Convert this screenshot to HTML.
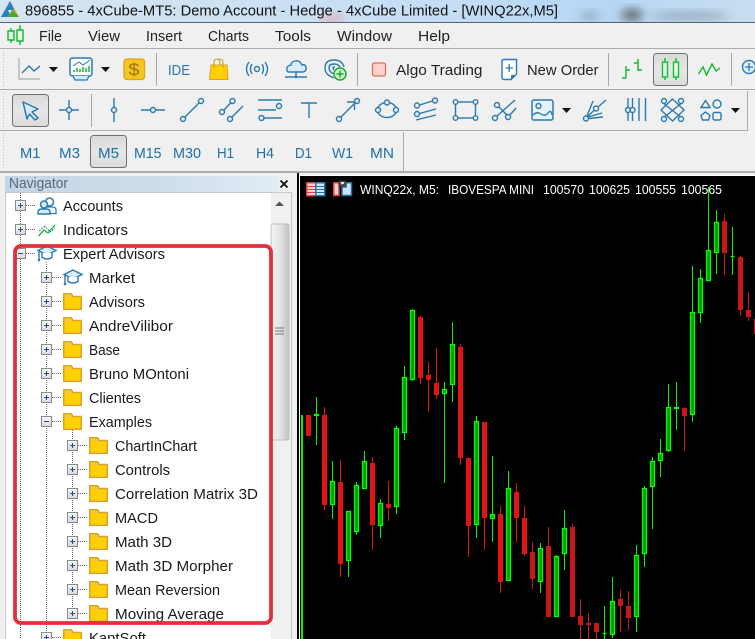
<!DOCTYPE html>
<html><head><meta charset="utf-8"><title>4xCube-MT5</title>
<style>
html,body{margin:0;padding:0;width:755px;height:639px;overflow:hidden;background:#f0f0f0}
svg{display:block}
text{font-family:"Liberation Sans",sans-serif}
.t{font-size:15px;fill:#1a1a1a}
.m{font-size:15px;fill:#222}
.b{font-size:15px;fill:#1f6fa8}
.c{font-size:12.5px;fill:#fff}
.i{fill:none;stroke:#2a7ab0;stroke-width:1.4}
.g{fill:none;stroke:#12b82e;stroke-width:1.4}
.d{stroke:#666;stroke-width:1;stroke-dasharray:1 1;fill:none}
</style></head><body>
<svg xmlns="http://www.w3.org/2000/svg" width="755" height="639" viewBox="0 0 755 639">
<defs>
<linearGradient id="tb" x1="0" x2="1" y1="0" y2="0"><stop offset="0" stop-color="#d6e5f1"/><stop offset=".6" stop-color="#c4def5"/><stop offset=".8" stop-color="#b5d6f5"/><stop offset="1" stop-color="#c9def0"/></linearGradient>
<linearGradient id="nv" x1="0" x2="1" y1="0" y2="0"><stop offset="0" stop-color="#c3d5e6"/><stop offset=".6" stop-color="#cfdeeb"/><stop offset="1" stop-color="#e2ecf6"/></linearGradient>
<linearGradient id="bx" x1="0" x2="0" y1="0" y2="1"><stop offset="0" stop-color="#fafafa"/><stop offset="1" stop-color="#d8d8d8"/></linearGradient>
<linearGradient id="sc" x1="0" x2="1" y1="0" y2="0"><stop offset="0" stop-color="#f4f4f4"/><stop offset=".5" stop-color="#e4e4e4"/><stop offset="1" stop-color="#c0c0c0"/></linearGradient>
<linearGradient id="ab" x1="0" x2="0" y1="0" y2="1"><stop offset="0" stop-color="#d8d8d8"/><stop offset=".5" stop-color="#e6e6e6"/><stop offset="1" stop-color="#dcdcdc"/></linearGradient>
<filter id="bl" x="-50%" y="-50%" width="200%" height="200%"><feGaussianBlur stdDeviation="5"/></filter>
<g id="p"><path class="d" d="M6 -.5H15"/><rect x="-4.5" y="-5.5" width="10" height="10" fill="url(#bx)" stroke="#8a8a8a"/><path d="M-2 -.5H3M.5 -3V2" stroke="#2b4a8a" fill="none"/></g>
<g id="n"><path class="d" d="M6 -.5H15"/><rect x="-4.5" y="-5.5" width="10" height="10" fill="url(#bx)" stroke="#8a8a8a"/><path d="M-2 -.5H3" stroke="#2b4a8a" fill="none"/></g>
<g id="f"><path d="M.7 -8.300H8.500L10 -5.500H18.300V7.300H.7Z" fill="#ffd000" stroke="#d9a030" stroke-width="1.400"/><path d="M1.500 -5H9" stroke="#e8c060" fill="none"/></g>
<g id="hat"><path d="M10 -8L19 -3.500L10 1L1 -3.500Z" fill="#d6ecfa" stroke="#2a7ab0" stroke-width="1.400"/><path d="M5 -1V3.500Q10 6.500 15 3.500V-1" fill="#fff" stroke="#2a7ab0" stroke-width="1.400"/><path d="M2 -3V5" stroke="#2a7ab0" stroke-width="1.400" fill="none"/><circle cx="2" cy="6" r="1.300" fill="#2a7ab0"/></g>
<g id="dd"><path d="M0 0H9L4.500 5Z" fill="#111"/></g>
</defs>

<!-- title bar -->
<rect width="755" height="22" fill="url(#tb)"/>
<ellipse cx="333" cy="19" rx="12" ry="4" fill="#dfa8b0" filter="url(#bl)"/>
<ellipse cx="632" cy="15" rx="11" ry="6" fill="#60666c" filter="url(#bl)"/>
<ellipse cx="690" cy="16" rx="40" ry="4" fill="#8fa5b8" filter="url(#bl)"/>
<ellipse cx="590" cy="16" rx="10" ry="4" fill="#8fa5b8" filter="url(#bl)"/>
<path d="M10 1L19 17H1Z" fill="#e8a020"/><path d="M10 1L14 9L7 17H1Z" fill="#2a7fc0"/><path d="M7 17L12 9L19 17Z" fill="#48a83c"/><path d="M8 10L12 10L10 14Z" fill="#e8e8e8"/>
<text x="25" y="15.500" font-size="15" fill="#111" textLength="533" lengthAdjust="spacingAndGlyphs">896855 - 4xCube-MT5: Demo Account - Hedge - 4xCube Limited - [WINQ22x,M5]</text>
<rect y="22" width="755" height="1" fill="#56626c"/>

<!-- menu -->
<rect y="23" width="755" height="150" fill="#f0f0f0"/>
<path d="M8 31h6v9H8zM17 30h6v11h-6z" fill="#e4f7e4" stroke="#14b82e" stroke-width="1.400"/><path d="M20 25V30M20 41V45M11 28V31M11 40V43" stroke="#14b82e" stroke-width="1.400"/>
<text class="m" x="39" y="41" textLength="23" lengthAdjust="spacingAndGlyphs">File</text>
<text class="m" x="88" y="41" textLength="32" lengthAdjust="spacingAndGlyphs">View</text>
<text class="m" x="146" y="41" textLength="36" lengthAdjust="spacingAndGlyphs">Insert</text>
<text class="m" x="208" y="41" textLength="41" lengthAdjust="spacingAndGlyphs">Charts</text>
<text class="m" x="275" y="41" textLength="36" lengthAdjust="spacingAndGlyphs">Tools</text>
<text class="m" x="337" y="41" textLength="55" lengthAdjust="spacingAndGlyphs">Window</text>
<text class="m" x="418" y="41" textLength="32" lengthAdjust="spacingAndGlyphs">Help</text>
<rect y="48" width="755" height="1" fill="#acacac"/>
<path d="M3.500 52V88M3.500 93V129M3.500 134V170" stroke="#bbb" stroke-dasharray="1 2" fill="none"/>

<!-- toolbar 1 -->
<path d="M19 58V79H40" stroke="#b8b8b8" stroke-width="1.500" fill="none"/>
<path d="M22 73L29 66L34 71L40 66" class="i"/>
<use href="#dd" x="49" y="67"/>
<rect x="70" y="58" width="22" height="18" rx="2.500" fill="#f8fbfd" stroke="#2a7ab0" stroke-width="1.500"/>
<path d="M73 66L79 62L83 65L90 60" fill="none" stroke="#2a7ab0"/>
<path d="M74 72V70M77 72V68M80 72V69M83 72V67M86 72V68M89 72V66" stroke="#14b82e" stroke-width="1.500"/>
<path d="M73 76L75 80H87L89 76" fill="#d6ecfa" stroke="#2a7ab0" stroke-width="1.300"/>
<use href="#dd" x="101" y="67"/>
<rect x="124" y="59" width="20.500" height="20.500" rx="3" fill="#f7c520" stroke="#dca510" stroke-width="1.300"/>
<text x="128.500" y="75" font-size="17" fill="#9a7010" textLength="11" lengthAdjust="spacingAndGlyphs">$</text>
<rect x="156" y="53" width="1" height="33" fill="#a8a8a8"/>
<text x="168" y="75" font-size="15" fill="#2a7ab0" textLength="22" lengthAdjust="spacingAndGlyphs">IDE</text>
<path d="M211 65H227L228 79.500H209.500Z" fill="#ffcf00" stroke="#d8a428"/><path d="M214 68V62Q214 59 218 59Q223 59 223 62V68M218 59Q220 60 220 65" fill="none" stroke="#c89a28" stroke-width="1.100"/>
<circle cx="257" cy="69" r="2.500" class="i"/><path d="M252 64Q249 69 252 74M262 64Q265 69 262 74M249 62Q244 69 249 76M265 62Q270 69 265 76" class="i"/>
<path d="M289 72H303Q307 71 306 67Q305 64 302 65Q300 60 295 61Q291 62 291 65Q286 66 287 70Q287 72 289 72Z" fill="#d8eefc" stroke="#2a7ab0" stroke-width="1.400"/><path d="M296 72V77M285 77H307" class="i"/><circle cx="296" cy="77" r="1.300" fill="#2a7ab0"/>
<path d="M334 78Q325 75 325 68Q325 60 334 60Q342 60 344 67M334 74Q329 72 329 68Q329 64 334 64Q338 64 340 67M334 70Q333 69 333 68Q333 67 335 67" class="i"/>
<circle cx="340" cy="74" r="6" fill="#cdf2cd" stroke="#14a82a" stroke-width="1.400"/><path d="M336.500 74H343.500M340 70.500V77.500" stroke="#14a82a" stroke-width="1.400"/>
<rect x="357" y="53" width="1" height="33" fill="#a8a8a8"/>
<rect x="372.500" y="63" width="13" height="13" rx="2" fill="#fcd2cc" stroke="#e06a64" stroke-width="1.300"/>
<text class="m" x="396" y="75" textLength="86.500" lengthAdjust="spacingAndGlyphs">Algo Trading</text>
<path d="M504 59.500H516.500V74L511 79.500H504Q502 79.500 502 77.500V61.500Q502 59.500 504 59.500Z" fill="#fff" stroke="#2a7ab0" stroke-width="1.400"/><path d="M505.500 68H513M509.200 64V72" stroke="#2a7ab0" stroke-width="1.300"/><path d="M511 79L511 75H516Z" fill="#2a7ab0"/>
<text class="m" x="527" y="75" textLength="71.500" lengthAdjust="spacingAndGlyphs">New Order</text>
<rect x="608" y="53" width="1" height="33" fill="#a8a8a8"/>
<path d="M626 66V78M622 78H626M626 70H630M638 59V71M634 63H638M638 70H642" class="g"/>
<rect x="653.500" y="53.500" width="34" height="32" rx="3" fill="url(#ab)" stroke="#707070"/>
<rect x="662.500" y="62" width="5" height="15" fill="#e8f8e8" stroke="#10c030" stroke-width="1.400"/><rect x="673.500" y="62" width="5" height="15" fill="#e8f8e8" stroke="#10c030" stroke-width="1.400"/><path d="M665 58V62M665 77V80M676 58V62M676 77V80" class="g"/>
<path d="M698.500 74L703 67L706.500 75L712 64L716 71L720 68" class="g"/>
<rect x="731" y="53" width="1" height="33" fill="#a8a8a8"/>
<circle cx="749" cy="67" r="6.500" fill="#e0f0fb" stroke="#2a7ab0" stroke-width="1.400"/><path d="M745 67H753M749 63V71" stroke="#2a7ab0" stroke-width="1.300"/>
<rect y="89" width="755" height="1" fill="#acacac"/>

<!-- toolbar 2 -->
<rect x="12.500" y="94.500" width="36" height="32" rx="3" fill="url(#ab)" stroke="#707070"/>
<path d="M23 102L38 109L32 112L38 118L35 120L29.500 114L27 119Z" fill="#d6ecfa" stroke="#2a7ab0" stroke-width="1.500" stroke-linejoin="round"/>
<circle cx="69" cy="110" r="2.500" class="i"/><path d="M59 110H66M72 110H79M69 100V107M69 113V120" class="i"/>
<rect x="91" y="94" width="1" height="33" fill="#a8a8a8"/>
<circle cx="114" cy="110" r="2.500" class="i"/><path d="M114 98V107.500M114 112.500V122" class="i"/>
<circle cx="153" cy="110" r="2.500" class="i"/><path d="M141 110H150.500M155.500 110H165" class="i"/>
<circle cx="183" cy="119" r="2.500" class="i"/><circle cx="201" cy="101" r="2.500" class="i"/><path d="M185 117L199 103" class="i"/>
<circle cx="222" cy="112" r="2.500" class="i"/><circle cx="232.500" cy="101" r="2.500" class="i"/><path d="M224 110L230.500 103" class="i"/><circle cx="230" cy="119" r="2.500" class="i"/><path d="M232 117L243 106" class="i"/>
<path d="M258 100H282M258 110H276M264 118H282" class="i"/><circle cx="279" cy="106" r="2.500" fill="#f0f0f0" stroke="#2a7ab0" stroke-width="1.400"/><circle cx="261.500" cy="118" r="2.500" fill="#f0f0f0" stroke="#2a7ab0" stroke-width="1.400"/>
<path d="M301 103H317M309 103V118" class="i"/>
<circle cx="339" cy="119" r="2.500" class="i"/><circle cx="357" cy="101" r="2.500" class="i"/><path d="M341 117L355 103M347 102H354.500V110" class="i"/>
<ellipse cx="387" cy="110" rx="9.500" ry="7.500" class="i"/><circle cx="387" cy="102.500" r="2.500" fill="#f0f0f0" stroke="#2a7ab0" stroke-width="1.400"/><circle cx="378" cy="110" r="2.500" fill="#f0f0f0" stroke="#2a7ab0" stroke-width="1.400"/><circle cx="396" cy="110" r="2.500" fill="#f0f0f0" stroke="#2a7ab0" stroke-width="1.400"/>
<circle cx="417" cy="105.500" r="2.500" class="i"/><circle cx="417" cy="114" r="2.500" class="i"/><circle cx="435" cy="100.500" r="2.500" class="i"/><path d="M419.500 105L432.500 101M419.500 113.500L436 109M416 120L436 115" class="i"/>
<rect x="455.500" y="102" width="20" height="16" class="i"/><circle cx="455.500" cy="102" r="2.300" fill="#f0f0f0" stroke="#2a7ab0" stroke-width="1.400"/><circle cx="475.500" cy="102" r="2.300" fill="#f0f0f0" stroke="#2a7ab0" stroke-width="1.400"/><circle cx="455.500" cy="118" r="2.300" fill="#f0f0f0" stroke="#2a7ab0" stroke-width="1.400"/><circle cx="475.500" cy="118" r="2.300" fill="#f0f0f0" stroke="#2a7ab0" stroke-width="1.400"/>
<circle cx="497" cy="105" r="2.500" class="i"/><circle cx="495" cy="118" r="2.500" class="i"/><circle cx="508" cy="117" r="2.500" class="i"/><path d="M499 107L507 115M497 116L515 100M510 115L516 108" class="i"/>
<rect x="532" y="100" width="21" height="20" rx="2" fill="#e6f3fc" stroke="#2a7ab0" stroke-width="1.500"/><circle cx="538.500" cy="106" r="2.500" class="i"/><path d="M533 115Q537 111 541 114T548 113T552 115" class="i"/>
<use href="#dd" x="562" y="108"/>
<circle cx="586" cy="118.500" r="2.500" class="i"/><circle cx="596" cy="108.500" r="2.500" class="i"/><path d="M587 116L593 101M588 116L594 110.500M598 107L606 100M588 117L602 113M589 118.500L603 117" class="i"/>
<circle cx="628" cy="110" r="2.500" class="i"/><circle cx="632.500" cy="110" r="2.500" class="i"/><path d="M628 98V107.500M628 112.500V121M632.500 98V107.500M632.500 112.500V121M639 98V121M645.500 98V121" class="i"/>
<path d="M662 102L683 119M683 102L662 119M672.500 99L684 110L672.500 121L661 110Z" class="i"/><circle cx="664" cy="101" r="2.500" fill="#f0f0f0" stroke="#2a7ab0" stroke-width="1.400"/><circle cx="681" cy="101" r="2.500" fill="#f0f0f0" stroke="#2a7ab0" stroke-width="1.400"/><circle cx="664" cy="119" r="2.500" fill="#f0f0f0" stroke="#2a7ab0" stroke-width="1.400"/><circle cx="681" cy="119" r="2.500" fill="#f0f0f0" stroke="#2a7ab0" stroke-width="1.400"/>
<path d="M701 107.500L705.500 100.500L710 107.500Z" class="i"/><circle cx="717" cy="104" r="4" class="i"/><path d="M705.500 112L710 115.500L708.500 120H702.500L701 115.500Z" class="i"/><rect x="713" y="112.500" width="8" height="7.500" rx="1.500" class="i"/>
<use href="#dd" x="731" y="108"/>
<rect y="130" width="748" height="1" fill="#acacac"/>
<rect x="747" y="91" width="1" height="40" fill="#acacac"/>

<!-- toolbar 3 -->
<rect x="90.500" y="135.500" width="36" height="32" rx="3" fill="url(#ab)" stroke="#707070"/>
<text class="b" x="20" y="158" textLength="20.500" lengthAdjust="spacingAndGlyphs">M1</text>
<text class="b" x="59" y="158" textLength="21" lengthAdjust="spacingAndGlyphs">M3</text>
<text class="b" x="98" y="158" textLength="21" lengthAdjust="spacingAndGlyphs">M5</text>
<text class="b" x="134" y="158" textLength="27.500" lengthAdjust="spacingAndGlyphs">M15</text>
<text class="b" x="173" y="158" textLength="28" lengthAdjust="spacingAndGlyphs">M30</text>
<text class="b" x="217" y="158" textLength="17" lengthAdjust="spacingAndGlyphs">H1</text>
<text class="b" x="256" y="158" textLength="18" lengthAdjust="spacingAndGlyphs">H4</text>
<text class="b" x="295" y="158" textLength="17" lengthAdjust="spacingAndGlyphs">D1</text>
<text class="b" x="332" y="158" textLength="21" lengthAdjust="spacingAndGlyphs">W1</text>
<text class="b" x="370" y="158" textLength="24" lengthAdjust="spacingAndGlyphs">MN</text>
<rect x="403" y="132" width="1" height="40" fill="#acacac"/>
<rect y="171" width="755" height="2" fill="#acacac"/>

<!-- navigator -->
<rect x="5" y="176" width="274" height="16" fill="url(#nv)"/>
<text x="9" y="188" font-size="14.500" fill="#56687a" textLength="59" lengthAdjust="spacingAndGlyphs">Navigator</text>
<path d="M280.500 180.500L287.500 187.500M287.500 180.500L280.500 187.500" stroke="#111" stroke-width="1.800"/>
<rect x="5" y="192" width="266" height="447" fill="#fff"/>
<rect x="5" y="192" width="286" height="1" fill="#c8c8c8"/>
<rect x="5" y="192" width="1" height="447" fill="#c8c8c8"/>
<rect x="271" y="193" width="20" height="446" fill="#f0f0f0"/>
<path d="M275 206H284L279.500 201.500Z" fill="#555"/>
<rect x="271" y="224" width="18" height="216" rx="2" fill="url(#sc)" stroke="#c0c0c0"/>
<path d="M275 328H284M275 331H284M275 334H284" stroke="#777" fill="none"/>
<rect x="291" y="173" width="6" height="466" fill="#f0f0f0"/>
<rect x="297" y="173" width="2" height="466" fill="#000"/>
<rect x="291" y="192" width="1" height="447" fill="#c4c4c4"/>

<path class="d" d="M20.500 193V639M46.500 262V639M72.500 430V620"/>

<use href="#p" x="20" y="206"/>
<use href="#p" x="20" y="230"/>
<use href="#n" x="20" y="254"/>
<use href="#p" x="46" y="278"/>
<use href="#p" x="46" y="302"/>
<use href="#p" x="46" y="326"/>
<use href="#p" x="46" y="350"/>
<use href="#p" x="46" y="374"/>
<use href="#p" x="46" y="398"/>
<use href="#n" x="46" y="422"/>
<use href="#p" x="72" y="446"/>
<use href="#p" x="72" y="470"/>
<use href="#p" x="72" y="494"/>
<use href="#p" x="72" y="518"/>
<use href="#p" x="72" y="542"/>
<use href="#p" x="72" y="566"/>
<use href="#p" x="72" y="590"/>
<use href="#p" x="72" y="614"/>
<use href="#p" x="46" y="638"/>

<!-- accounts icon -->
<circle cx="49.500" cy="202" r="4" fill="#fff" stroke="#2a7ab0" stroke-width="1.500"/>
<path d="M44 213.500V210Q44 207 48 207H52Q56 207 56 210V213.500Z" fill="#fff" stroke="#2a7ab0" stroke-width="1.300"/>
<circle cx="44" cy="204.500" r="3.500" fill="#d6ecfa" stroke="#2a7ab0" stroke-width="1.500"/>
<path d="M38 214V212Q38 209 42 209H46Q50 209 50 212V214Z" fill="#d6ecfa" stroke="#2a7ab0" stroke-width="1.400"/>
<!-- indicators icon -->
<path d="M38.500 236L44 230L48 233L55 225" fill="none" stroke="#14b82e" stroke-width="1.300"/><path d="M39 231L45 226L50 232L55 228" fill="none" stroke="#2a7ab0" stroke-width="1" stroke-dasharray="2 1"/>
<use href="#hat" x="37" y="254"/>
<use href="#hat" x="63" y="278"/>

<use href="#f" x="63" y="302"/>
<use href="#f" x="63" y="326"/>
<use href="#f" x="63" y="350"/>
<use href="#f" x="63" y="374"/>
<use href="#f" x="63" y="398"/>
<use href="#f" x="63" y="422"/>
<use href="#f" x="89" y="446"/>
<use href="#f" x="89" y="470"/>
<use href="#f" x="89" y="494"/>
<use href="#f" x="89" y="518"/>
<use href="#f" x="89" y="542"/>
<use href="#f" x="89" y="566"/>
<use href="#f" x="89" y="590"/>
<use href="#f" x="89" y="614"/>
<use href="#f" x="63" y="638"/>

<text class="t" x="63" y="211" textLength="60" lengthAdjust="spacingAndGlyphs">Accounts</text>
<text class="t" x="63" y="235" textLength="65" lengthAdjust="spacingAndGlyphs">Indicators</text>
<text class="t" x="63" y="259" textLength="102" lengthAdjust="spacingAndGlyphs">Expert Advisors</text>
<text class="t" x="89" y="283" textLength="46" lengthAdjust="spacingAndGlyphs">Market</text>
<text class="t" x="89" y="307" textLength="56" lengthAdjust="spacingAndGlyphs">Advisors</text>
<text class="t" x="89" y="331" textLength="84" lengthAdjust="spacingAndGlyphs">AndreVilibor</text>
<text class="t" x="89" y="355" textLength="31" lengthAdjust="spacingAndGlyphs">Base</text>
<text class="t" x="89" y="379" textLength="100" lengthAdjust="spacingAndGlyphs">Bruno MOntoni</text>
<text class="t" x="89" y="403" textLength="52" lengthAdjust="spacingAndGlyphs">Clientes</text>
<text class="t" x="89" y="427" textLength="63" lengthAdjust="spacingAndGlyphs">Examples</text>
<text class="t" x="115" y="451" textLength="82" lengthAdjust="spacingAndGlyphs">ChartInChart</text>
<text class="t" x="115" y="475" textLength="55" lengthAdjust="spacingAndGlyphs">Controls</text>
<text class="t" x="115" y="499" textLength="143" lengthAdjust="spacingAndGlyphs">Correlation Matrix 3D</text>
<text class="t" x="115" y="523" textLength="43" lengthAdjust="spacingAndGlyphs">MACD</text>
<text class="t" x="115" y="547" textLength="57" lengthAdjust="spacingAndGlyphs">Math 3D</text>
<text class="t" x="115" y="571" textLength="118" lengthAdjust="spacingAndGlyphs">Math 3D Morpher</text>
<text class="t" x="115" y="595" textLength="105" lengthAdjust="spacingAndGlyphs">Mean Reversion</text>
<text class="t" x="115" y="619" textLength="109" lengthAdjust="spacingAndGlyphs">Moving Average</text>
<text class="t" x="89" y="643" textLength="57" lengthAdjust="spacingAndGlyphs">KantSoft</text>

<rect x="15" y="246" width="256" height="377" rx="6" fill="none" stroke="#e0303c" stroke-width="3.800"/>

<!-- chart -->
<rect x="299" y="175" width="456" height="464" fill="#000"/>
<rect x="299" y="175" width="456" height="1" fill="#fff"/>
<rect x="299" y="175" width="1" height="464" fill="#fff"/>
<rect x="306.750" y="182.750" width="9" height="13" fill="#fbd0cc" stroke="#e04040" stroke-width="1.500"/><rect x="315.750" y="182.750" width="9" height="13" fill="#cde6fa" stroke="#1f6fb0" stroke-width="1.500"/><path d="M307 186.500H315M307 189.500H315M307 192.500H315" stroke="#e04040"/><path d="M316 186.500H324M316 189.500H324M316 192.500H324" stroke="#1f6fb0"/>
<path d="M333.750 182.750H339V195.500H333.750Z" fill="#fbd0cc" stroke="#e04040" stroke-width="1.500"/><path d="M346 182.750H351.500V195.500H342V187H346Z" fill="#cde6fa" stroke="#1f6fb0" stroke-width="1.500"/><rect x="339" y="181" width="7" height="5" fill="#555" stroke="#333"/><rect x="341" y="182" width="3" height="2" fill="#ddd"/>

<path fill="#e01414" d="M306 415h5v21h-5zM324 407h1v103h-1zM322 415h5v90h-5zM340 460h1v117h-1zM338 482h5v82h-5zM372 457h1v93h-1zM370 463h5v62h-5zM388 481h1v40h-1zM386 504h5v4h-5zM420 316h1v68h-1zM418 317h5v61h-5zM428 362h1v50h-1zM426 375h5v5h-5zM436 348h1v51h-1zM434 383h5v12h-5zM460 344h1v121h-1zM458 347h5v111h-5zM468 458h1v99h-1zM466 458h5v68h-5zM484 422h1v128h-1zM482 422h5v96h-5zM500 506h1v87h-1zM498 514h5v68h-5zM516 483h1v59h-1zM514 492h5v26h-5zM524 506h1v50h-1zM522 518h5v36h-5z"/>
<path fill="#c8181c" d="M532 542h1v47h-1zM530 552h5v27h-5zM548 527h1v90h-1zM546 546h5v71h-5zM572 524h1v93h-1zM570 527h5v90h-5zM580 599h1v40h-1zM578 616h5v9h-5zM588 613h1v26h-1zM586 623h5v2h-5zM596 623h1v16h-1zM594 623h5v9h-5zM620 590h1v42h-1zM618 599h5v7h-5zM628 591h1v39h-1zM626 606h5v12h-5zM684 407h1v44h-1zM682 408h5v8h-5zM724 214h1v61h-1zM722 221h5v32h-5zM740 256h1v60h-1zM738 257h5v53h-5zM748 292h1v29h-1zM746 310h5v7h-5zM754 319h1v15h-1z"/>
<path fill="#00f800" d="M301 415h2v224h-2zM316 397h1v48h-1zM332 461h1v58h-1zM348 511h1v66h-1zM356 482h1v53h-1zM364 451h1v38h-1zM380 499h1v39h-1zM396 426h1v88h-1zM404 366h1v74h-1zM412 309h1v72h-1zM444 382h1v101h-1zM452 322h1v80h-1zM476 416h1v122h-1zM492 456h1v86h-1zM508 471h1v110h-1zM540 543h1v50h-1zM556 555h1v62h-1zM564 510h1v60h-1zM604 606h1v33h-1zM612 577h1v61h-1zM636 545h1v87h-1zM644 486h1v81h-1zM652 457h1v72h-1zM660 439h1v38h-1zM668 384h1v68h-1zM676 382h1v48h-1zM692 266h1v156h-1zM700 269h1v54h-1zM708 187h1v94h-1zM716 210h1v64h-1zM732 227h1v48h-1z"/>
<path fill="#00a000" stroke="#00ff00" stroke-width="1.200" d="M314.500 414.500h4v1h-4zM330.500 481.500h4v23h-4zM346.500 511.500h4v49h-4zM354.500 485.500h4v46h-4zM362.500 461.500h4v27h-4zM378.500 503.500h4v22h-4zM394.500 428.500h4v78h-4zM402.500 377.500h4v55h-4zM410.500 310.500h4v69h-4zM442.500 389.500h4v4h-4zM450.500 344.500h4v40h-4zM474.500 421.500h4v103h-4zM490.500 514.500h4v4h-4zM506.500 488.500h4v92h-4zM538.500 548.500h4v33h-4zM554.500 556.500h4v60h-4zM562.500 528.500h4v25h-4zM602.500 633.500h4v0h-4zM610.500 601.500h4v33h-4zM634.500 555.500h4v61h-4zM642.500 488.500h4v65h-4zM650.500 461.500h4v25h-4zM658.500 453.500h4v7h-4zM666.500 407.500h4v43h-4zM674.500 407.500h4v1h-4zM690.500 312.500h4v102h-4zM698.500 278.500h4v34h-4zM706.500 250.500h4v30h-4zM714.500 222.500h4v30h-4zM730.500 256.500h4v0h-4z"/>

<text class="c" x="360" y="194" textLength="79" lengthAdjust="spacingAndGlyphs">WINQ22x, M5:</text>
<text class="c" x="448" y="194" textLength="86" lengthAdjust="spacingAndGlyphs">IBOVESPA MINI</text>
<text class="c" x="543" y="194" textLength="41" lengthAdjust="spacingAndGlyphs">100570</text>
<text class="c" x="589" y="194" textLength="41" lengthAdjust="spacingAndGlyphs">100625</text>
<text class="c" x="635" y="194" textLength="41" lengthAdjust="spacingAndGlyphs">100555</text>
<text class="c" x="681" y="194" textLength="41" lengthAdjust="spacingAndGlyphs">100565</text>
</svg>
</body></html>
